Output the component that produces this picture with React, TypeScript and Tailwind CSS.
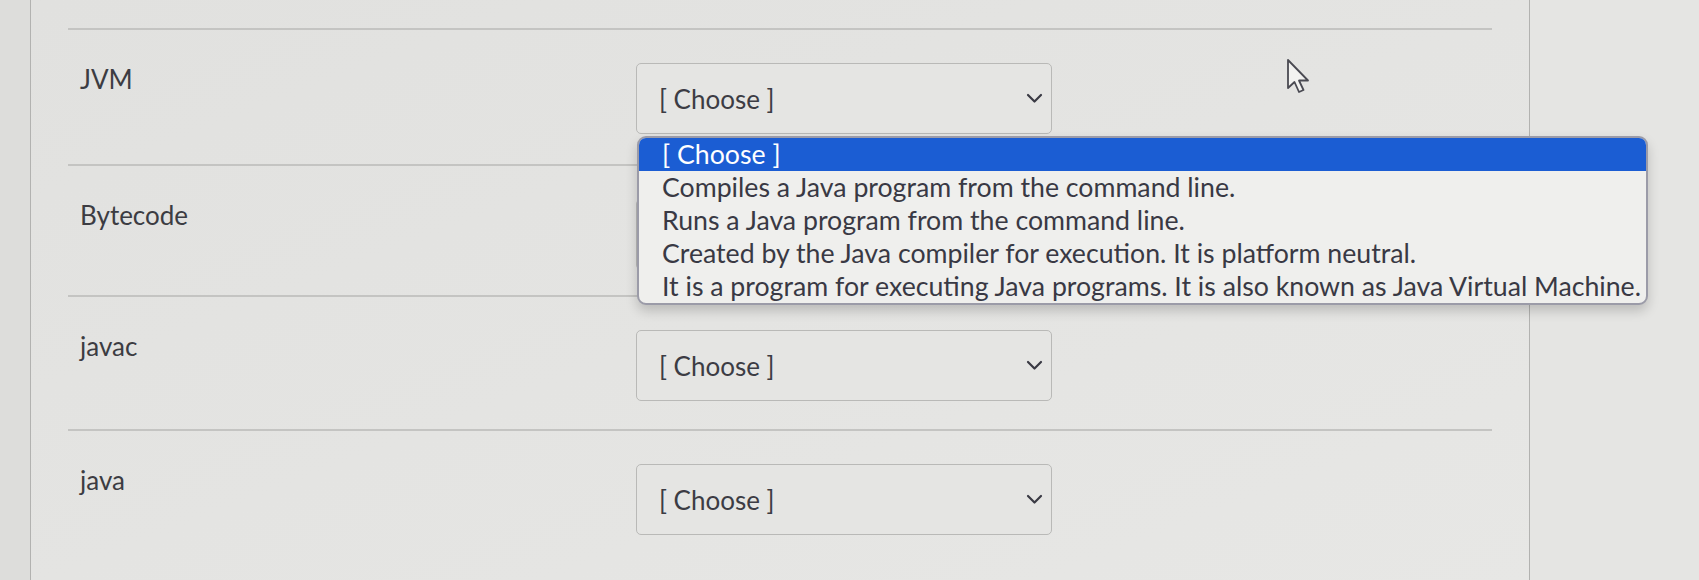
import React from "react";

const rows = [
  { label: "JVM", h: "h-[136px]", hidden: false },
  { label: "Bytecode", h: "h-[131px]", hidden: true },
  { label: "javac", h: "h-[134px]", hidden: false },
  { label: "java", h: "h-[160px]", hidden: false },
];

const options = [
  "[ Choose ]",
  "Compiles a Java program from the command line.",
  "Runs a Java program from the command line.",
  "Created by the Java compiler for execution. It is platform neutral.",
  "It is a program for executing Java programs. It is also known as Java Virtual Machine.",
];

function Chevron() {
  return (
    <svg width="17" height="11" viewBox="0 0 17 11" fill="none">
      <path d="M2 2 L8.5 8.5 L15 2" stroke="#3a3a44" strokeWidth="2.2" strokeLinecap="round" strokeLinejoin="round" />
    </svg>
  );
}

function Select({ hidden }: { hidden: boolean }) {
  return (
    <div className="w-[416px] h-[71px] border border-[#b9b9b7] rounded-[5px] bg-[#e5e5e3] flex items-center justify-between pl-[22px] pr-[8px]">
      <span className={hidden ? "invisible text-[26px] leading-[32px] text-[#3c3c44]" : "text-[26px] leading-[32px] text-[#3c3c44]"}>
        [ Choose ]
      </span>
      <Chevron />
    </div>
  );
}

export default function App() {
  return (
    <div className="relative w-[1699px] h-[580px] overflow-hidden bg-[#e3e3e1] font-['Lato','Open_Sans',sans-serif]">
      <div className="flex h-full">
        <div className="w-[30px] h-full bg-[#dddddb]" />
        <div className="w-[1500px] h-full border-x border-[#b2b2b0] bg-gradient-to-br from-[#e1e1df] to-[#e7e7e5] pt-[28px] pl-[37px]">
          <div className="w-[1424px]">
            {rows.map((r) => (
              <div key={r.label} className={`${r.h} border-t-2 border-[#c4c4c2] flex items-start pt-[33px]`}>
                <div className="w-[568px] pl-[12px] text-[26px] leading-[32px] text-[#3c3c42]">{r.label}</div>
                <Select hidden={r.hidden} />
              </div>
            ))}
          </div>
        </div>
        <div className="flex-1 h-full bg-[#e5e5e3]" />
      </div>

      {/* open dropdown list */}
      <div className="absolute left-[637px] top-[136px] w-[1011px] rounded-[9px] border-2 border-[#9b9ba8] bg-[#efefed] shadow-[0_6px_12px_rgba(0,0,0,0.18)] overflow-hidden">
        {options.map((o, i) => (
          <div
            key={o}
            className={
              i === 0
                ? "h-[33px] leading-[33px] pl-[23px] text-[26.7px] whitespace-nowrap bg-[#1b5dd3] text-white"
                : "h-[33px] leading-[33px] pl-[23px] text-[26.7px] whitespace-nowrap text-[#393944]"
            }
          >
            {o}
          </div>
        ))}
      </div>

      {/* mouse cursor */}
      <svg className="absolute left-[1286px] top-[58px]" width="26" height="38" viewBox="0 0 26 38" fill="none">
        <path
          d="M2 2 L2 30 L8.5 24 L13 34 L17.5 32 L13 22.5 L22 22.5 Z"
          fill="#f2f2f0"
          stroke="#4a4a52"
          strokeWidth="1.8"
          strokeLinejoin="round"
        />
      </svg>
    </div>
  );
}
